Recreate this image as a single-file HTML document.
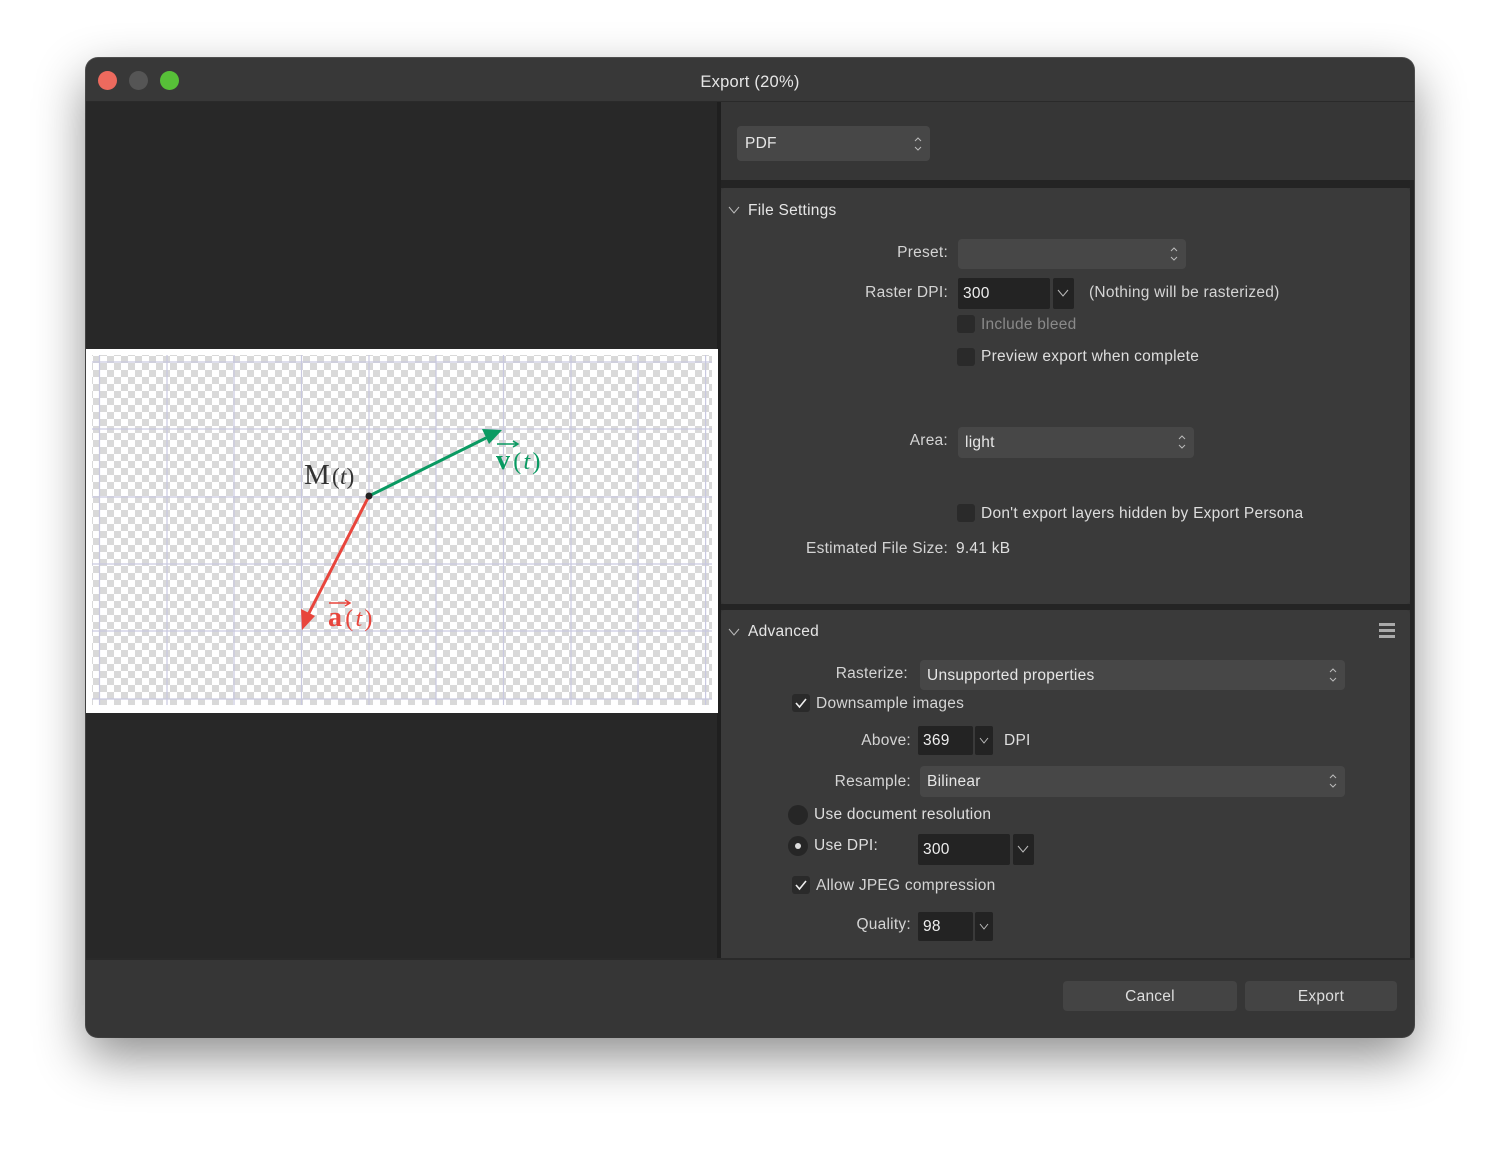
<!DOCTYPE html>
<html><head><meta charset="utf-8"><style>
*{margin:0;padding:0;box-sizing:border-box}
body{width:1500px;height:1151px;background:#fff;position:relative;overflow:hidden;font-family:"Liberation Sans",sans-serif;font-size:15.5px;letter-spacing:.25px;color:#dedede}
.a{position:absolute}
.win{left:86px;top:58px;width:1328px;height:979px;border-radius:12px;background:#363636;box-shadow:0 20px 50px rgba(0,0,0,.45),0 0 0 1px #555;overflow:hidden}
.lbl{position:absolute;text-align:right;line-height:18px;color:#d4d4d4;margin-top:1px}
.t{position:absolute;line-height:18px;white-space:nowrap;margin-top:1px}
.pop{position:absolute;background:#474747;border-radius:4px}
.fld{position:absolute;background:#232323;border-radius:2px;line-height:18px;padding-left:5px;color:#eee}
.cb{position:absolute;width:18px;height:18px;background:#2a2a2a;border-radius:3px}
.ud{position:absolute;width:10px;height:18px}
</style></head><body>
<div class="a win">
 <div class="a" style="left:0;top:0;width:1328px;height:44px;background:#383838;border-bottom:1px solid #2a2a2a"></div>
 <div class="a" style="left:12px;top:13px;width:19px;height:19px;border-radius:50%;background:#ed6a5e"></div>
 <div class="a" style="left:43px;top:13px;width:19px;height:19px;border-radius:50%;background:#555"></div>
 <div class="a" style="left:74px;top:13px;width:19px;height:19px;border-radius:50%;background:#57c038"></div>
 <div class="t" style="left:0;width:1328px;top:14px;text-align:center;font-size:16.5px;color:#e6e6e6">Export (20%)</div>
 <div class="a" style="left:0;top:44px;width:632px;height:856px;background:#282828"></div>
 <div class="a" style="left:631px;top:44px;width:4px;height:856px;background:#1f1f1f"></div>
 <div class="a" style="left:635px;top:122px;width:693px;height:8px;background:#242424"></div>
 <div class="a" style="left:635px;top:546px;width:693px;height:6px;background:#242424"></div>
 <div class="a" style="left:1324px;top:122px;width:4px;height:778px;background:#242424"></div>
 <div class="a" style="left:635px;top:130px;width:689px;height:416px;background:#3a3a3a;border-radius:4px"></div>
 <div class="a" style="left:635px;top:552px;width:689px;height:348px;background:#3a3a3a;border-radius:4px 4px 0 0"></div>
 <div class="a" style="left:0;top:900px;width:1328px;height:2px;background:#2a2a2a"></div>
</div>

<svg class="a" style="left:86px;top:349px" width="632" height="364" viewBox="0 0 632 364">
 <defs><pattern id="ck" width="14" height="14" patternUnits="userSpaceOnUse"><rect width="14" height="14" fill="#fff"/><rect width="7" height="7" fill="#d9d9d9"/><rect x="7" y="7" width="7" height="7" fill="#d9d9d9"/></pattern></defs>
 <rect width="632" height="364" fill="#fff"/>
 <rect x="6" y="6" width="620" height="350" fill="url(#ck)"/>
 <g stroke="#c9c9e0" stroke-width="1.2">
  <line x1="13.5" y1="6" x2="13.5" y2="356"/><line x1="81" y1="6" x2="81" y2="356"/><line x1="148" y1="6" x2="148" y2="356"/><line x1="215.5" y1="6" x2="215.5" y2="356"/><line x1="283" y1="6" x2="283" y2="356"/><line x1="350" y1="6" x2="350" y2="356"/><line x1="417.5" y1="6" x2="417.5" y2="356"/><line x1="485" y1="6" x2="485" y2="356"/><line x1="552" y1="6" x2="552" y2="356"/><line x1="619.6" y1="6" x2="619.6" y2="356"/>
  <line x1="6" y1="13" x2="626" y2="13"/><line x1="6" y1="80" x2="626" y2="80"/><line x1="6" y1="148" x2="626" y2="148"/><line x1="6" y1="215" x2="626" y2="215"/><line x1="6" y1="282" x2="626" y2="282"/><line x1="6" y1="350" x2="626" y2="350"/>
 </g>
 <line x1="283" y1="147" x2="402" y2="88" stroke="#0a9a62" stroke-width="3"/>
 <polygon points="416,81 396,80 403,95" fill="#0a9a62"/>
 <line x1="283" y1="147" x2="222" y2="266" stroke="#e8453c" stroke-width="3"/>
 <polygon points="216,281 215,260 229,267" fill="#e8453c"/>
 <circle cx="283" cy="147" r="3.5" fill="#222"/>
 <text x="218" y="135" font-family="Liberation Serif" font-size="29" fill="#333">M<tspan font-size="23" dx="2">(</tspan><tspan font-size="23" font-style="italic">t</tspan><tspan font-size="23">)</tspan></text>
 <text x="410" y="120" font-family="Liberation Serif" font-size="28" font-weight="bold" fill="#0a9a62">v<tspan font-weight="normal" font-size="24" dx="3">(</tspan><tspan font-weight="normal" font-style="italic" font-size="24" dx="2">t</tspan><tspan font-weight="normal" font-size="24" dx="2">)</tspan></text>
 <path d="M411 95 H432 M427 92 L432 95 L427 98" stroke="#0a9a62" stroke-width="1.5" fill="none"/>
 <text x="242" y="277" font-family="Liberation Serif" font-size="28" font-weight="bold" fill="#e8453c">a<tspan font-weight="normal" font-size="24" dx="3">(</tspan><tspan font-weight="normal" font-style="italic" font-size="24" dx="2">t</tspan><tspan font-weight="normal" font-size="24" dx="2">)</tspan></text>
 <path d="M243 254 H264 M259 251 L264 254 L259 257" stroke="#e8453c" stroke-width="1.5" fill="none"/>
</svg>

<div class="pop" style="left:737px;top:126px;width:193px;height:35px"></div>
<div class="t" style="left:745px;top:134px;color:#e6e6e6">PDF</div>
<svg class="ud" style="left:913px;top:135px" viewBox="0 0 10 18"><path d="M2 6 L5 3 L8 6 M2 12 L5 15 L8 12" stroke="#bbb" fill="none"/></svg>

<svg class="a" style="left:728px;top:205px" width="12" height="10"><path d="M1 2 L6 8 L11 2" stroke="#bbb" fill="none"/></svg>
<div class="t" style="left:748px;top:201px;color:#e6e6e6">File Settings</div>

<div class="lbl" style="left:760px;width:188px;top:243px">Preset:</div>
<div class="pop" style="left:958px;top:239px;width:228px;height:30px"></div>
<svg class="ud" style="left:1169px;top:245px" viewBox="0 0 10 18"><path d="M2 6 L5 3 L8 6 M2 12 L5 15 L8 12" stroke="#bbb" fill="none"/></svg>

<div class="lbl" style="left:760px;width:188px;top:283px">Raster DPI:</div>
<div class="fld" style="left:958px;top:278px;width:92px;height:31px;padding-top:7px">300</div>
<div class="fld" style="left:1053px;top:278px;width:21px;height:31px"></div>
<svg class="a" style="left:1057px;top:289px" width="12" height="9"><path d="M1 1 L6 7 L11 1" stroke="#bbb" fill="none"/></svg>
<div class="t" style="left:1089px;top:283px;color:#d4d4d4">(Nothing will be rasterized)</div>

<div class="cb" style="left:957px;top:315px"></div>
<div class="t" style="left:981px;top:315px;color:#8a8a8a">Include bleed</div>
<div class="cb" style="left:957px;top:348px"></div>
<div class="t" style="left:981px;top:347px">Preview export when complete</div>

<div class="lbl" style="left:760px;width:188px;top:431px">Area:</div>
<div class="pop" style="left:958px;top:427px;width:236px;height:31px"></div>
<div class="t" style="left:965px;top:433px;color:#e6e6e6">light</div>
<svg class="ud" style="left:1177px;top:433px" viewBox="0 0 10 18"><path d="M2 6 L5 3 L8 6 M2 12 L5 15 L8 12" stroke="#bbb" fill="none"/></svg>

<div class="cb" style="left:957px;top:504px"></div>
<div class="t" style="left:981px;top:504px">Don't export layers hidden by Export Persona</div>
<div class="lbl" style="left:760px;width:188px;top:539px">Estimated File Size:</div>
<div class="t" style="left:956px;top:539px">9.41 kB</div>

<svg class="a" style="left:728px;top:627px" width="12" height="10"><path d="M1 2 L6 8 L11 2" stroke="#bbb" fill="none"/></svg>
<div class="t" style="left:748px;top:622px;color:#e6e6e6">Advanced</div>
<div class="a" style="left:1379px;top:623px;width:16px;height:3px;background:#aaa"></div>
<div class="a" style="left:1379px;top:629px;width:16px;height:3px;background:#aaa"></div>
<div class="a" style="left:1379px;top:635px;width:16px;height:3px;background:#aaa"></div>

<div class="lbl" style="left:760px;width:148px;top:664px">Rasterize:</div>
<div class="pop" style="left:920px;top:660px;width:425px;height:30px"></div>
<div class="t" style="left:927px;top:666px;color:#e6e6e6">Unsupported properties</div>
<svg class="ud" style="left:1328px;top:666px" viewBox="0 0 10 18"><path d="M2 6 L5 3 L8 6 M2 12 L5 15 L8 12" stroke="#bbb" fill="none"/></svg>

<div class="cb" style="left:792px;top:694px"></div>
<svg class="a" style="left:795px;top:697px" width="12" height="12"><path d="M1 6 L4.5 10 L11 2" stroke="#eee" stroke-width="1.6" fill="none"/></svg>
<div class="t" style="left:816px;top:694px;color:#d4d4d4">Downsample images</div>

<div class="lbl" style="left:760px;width:151px;top:731px">Above:</div>
<div class="fld" style="left:918px;top:726px;width:55px;height:29px;padding-top:6px">369</div>
<div class="fld" style="left:975px;top:726px;width:18px;height:29px"></div>
<svg class="a" style="left:979px;top:737px" width="10" height="8"><path d="M1 1 L5 6 L9 1" stroke="#bbb" fill="none"/></svg>
<div class="t" style="left:1004px;top:731px">DPI</div>

<div class="lbl" style="left:760px;width:151px;top:772px">Resample:</div>
<div class="pop" style="left:920px;top:766px;width:425px;height:31px"></div>
<div class="t" style="left:927px;top:772px;color:#e6e6e6">Bilinear</div>
<svg class="ud" style="left:1328px;top:772px" viewBox="0 0 10 18"><path d="M2 6 L5 3 L8 6 M2 12 L5 15 L8 12" stroke="#bbb" fill="none"/></svg>

<div class="a" style="left:788px;top:805px;width:20px;height:20px;border-radius:50%;background:#262626"></div>
<div class="t" style="left:814px;top:805px">Use document resolution</div>
<div class="a" style="left:788px;top:836px;width:20px;height:20px;border-radius:50%;background:#262626"></div>
<div class="a" style="left:795px;top:843px;width:6px;height:6px;border-radius:50%;background:#ddd"></div>
<div class="t" style="left:814px;top:836px">Use DPI:</div>
<div class="fld" style="left:918px;top:834px;width:92px;height:31px;padding-top:7px">300</div>
<div class="fld" style="left:1013px;top:834px;width:21px;height:31px"></div>
<svg class="a" style="left:1017px;top:845px" width="12" height="9"><path d="M1 1 L6 7 L11 1" stroke="#bbb" fill="none"/></svg>

<div class="cb" style="left:792px;top:876px"></div>
<svg class="a" style="left:795px;top:879px" width="12" height="12"><path d="M1 6 L4.5 10 L11 2" stroke="#eee" stroke-width="1.6" fill="none"/></svg>
<div class="t" style="left:816px;top:876px;color:#d4d4d4">Allow JPEG compression</div>

<div class="lbl" style="left:760px;width:151px;top:915px">Quality:</div>
<div class="fld" style="left:918px;top:912px;width:55px;height:29px;padding-top:6px">98</div>
<div class="fld" style="left:975px;top:912px;width:18px;height:29px"></div>
<svg class="a" style="left:979px;top:923px" width="10" height="8"><path d="M1 1 L5 6 L9 1" stroke="#bbb" fill="none"/></svg>

<div class="pop" style="left:1063px;top:981px;width:174px;height:30px;background:#444"></div>
<div class="t" style="left:1063px;width:174px;top:987px;text-align:center">Cancel</div>
<div class="pop" style="left:1245px;top:981px;width:152px;height:30px;background:#444"></div>
<div class="t" style="left:1245px;width:152px;top:987px;text-align:center">Export</div>
</body></html>
